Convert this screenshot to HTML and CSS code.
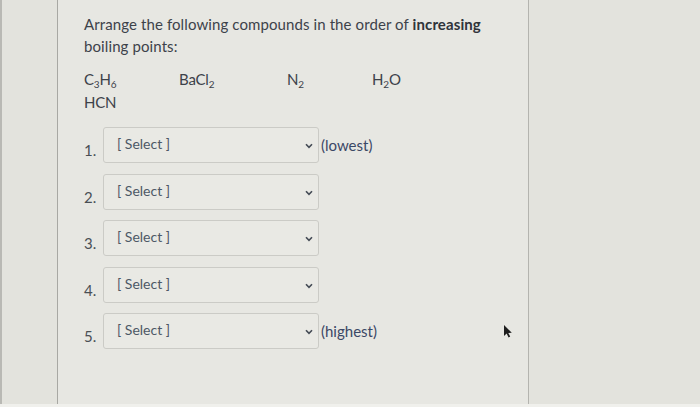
FILE: index.html
```html
<!DOCTYPE html>
<html lang="en">
  <head>
    <meta charset="UTF-8" />
    <meta name="viewport" content="width=device-width, initial-scale=1.0" />
    <title>Question</title>
    <link rel="stylesheet" href="styles.css">
  </head>
  <body>
    <div class="page">
      <div class="gutter"></div>
      <div class="question">
        <p class="prompt">
          Arrange the following compounds in the order of <strong>increasing</strong>
          boiling points:
        </p>
        <div class="compounds">
          <span class="compound c1">C<sub>3</sub>H<sub>6</sub></span>
          <span class="compound c2">BaCl<sub>2</sub></span>
          <span class="compound c3">N<sub>2</sub></span>
          <span class="compound c4">H<sub>2</sub>O</span>
          <span class="compound">HCN</span>
        </div>

        <ol class="answers">
          <li class="answer">
            <span class="num">1.</span>
            <div class="select">
              <span class="placeholder">[ Select ]</span>
              <svg class="chevron" viewBox="0 0 8 6" width="8" height="6"><path d="M1 1.2 L4 4.4 L7 1.2" /></svg>
            </div>
            <span class="hint">(lowest)</span>
          </li>
          <li class="answer">
            <span class="num">2.</span>
            <div class="select">
              <span class="placeholder">[ Select ]</span>
              <svg class="chevron" viewBox="0 0 8 6" width="8" height="6"><path d="M1 1.2 L4 4.4 L7 1.2" /></svg>
            </div>
          </li>
          <li class="answer">
            <span class="num">3.</span>
            <div class="select">
              <span class="placeholder">[ Select ]</span>
              <svg class="chevron" viewBox="0 0 8 6" width="8" height="6"><path d="M1 1.2 L4 4.4 L7 1.2" /></svg>
            </div>
          </li>
          <li class="answer">
            <span class="num">4.</span>
            <div class="select">
              <span class="placeholder">[ Select ]</span>
              <svg class="chevron" viewBox="0 0 8 6" width="8" height="6"><path d="M1 1.2 L4 4.4 L7 1.2" /></svg>
            </div>
          </li>
          <li class="answer">
            <span class="num">5.</span>
            <div class="select">
              <span class="placeholder">[ Select ]</span>
              <svg class="chevron" viewBox="0 0 8 6" width="8" height="6"><path d="M1 1.2 L4 4.4 L7 1.2" /></svg>
            </div>
            <span class="hint">(highest)</span>
          </li>
        </ol>
      </div>
      <div class="side">
        <!-- mouse pointer sitting over the page -->
        <svg class="cursor" viewBox="0 0 10 14" width="10" height="14">
          <path d="M1 1 L1 12 L3.6 9.6 L5.6 13.4 L7.2 12.6 L5.3 8.9 L8.8 8.7 Z" />
        </svg>
      </div>
    </div>
  </body>
</html>
```

FILE: styles.css
```css
body {
  margin: 0;
  padding: 0;
  background-color: #e3e3dd;
  font-family: Lato, "Open Sans", sans-serif;
  color: #3d424a;
}
.page {
  display: flex;
  height: 407px;
  border-bottom: 3px solid #f0f0ec;
  box-sizing: border-box;
}
.gutter {
  width: 58px;
  border-left: 2px solid #b9b9b4;
  border-right: 1px solid #a8a8a3;
  box-sizing: border-box;
}
.question {
  width: 471px;
  padding: 13px 0 0 26px;
  box-sizing: border-box;
  border-right: 1px solid #b4b4af;
  background-color: #e7e7e2;
}
.prompt {
  margin: 0;
  font-size: 15px;
  letter-spacing: 0.1px;
  line-height: 22px;
  width: 430px;
}
.prompt strong {
  font-weight: bold;
  color: #2f343a;
}

/* compound list */
.compounds {
  display: flex;
  flex-wrap: wrap;
  width: 380px;
  margin-top: 11px;
  font-size: 15px;
  letter-spacing: -0.2px;
  line-height: 23px;
}
.compound {
  white-space: nowrap;
}
.compound sub {
  font-size: 10px;
  line-height: 0;
  vertical-align: -3px;
}
.c1 { width: 95px; }
.c2 { width: 108px; }
.c3 { width: 85px; }
.c4 { width: 60px; }

/* dropdown rows */
.answers {
  list-style: none;
  margin: 13px 0 0 0;
  padding: 0;
}
.answer {
  display: flex;
  align-items: center;
  height: 36px;
  margin-bottom: 10.5px;
}
.num {
  width: 19px;
  padding-top: 10px;
  font-size: 15px;
  color: #4a4f55;
}
.select {
  width: 216px;
  height: 36px;
  box-sizing: border-box;
  border: 1px solid #cbcbc6;
  border-radius: 3px;
  background-color: #e9e9e4;
  display: flex;
  align-items: center;
  justify-content: space-between;
  padding: 0 5px 0 13px;
}
.placeholder {
  font-size: 14px;
  color: #4d5866;
  margin-top: -3px;
}
.chevron {
  margin-top: 2px;
}
.chevron path {
  fill: none;
  stroke: #444b55;
  stroke-width: 1.6;
}
.hint {
  margin-left: 2px;
  font-size: 15px;
  color: #3b4866;
}

.side {
  flex: 1;
  position: relative;
}
.cursor {
  position: absolute;
  left: -26px;
  top: 324px;
}
.cursor path {
  fill: #1e1e1e;
}
```
